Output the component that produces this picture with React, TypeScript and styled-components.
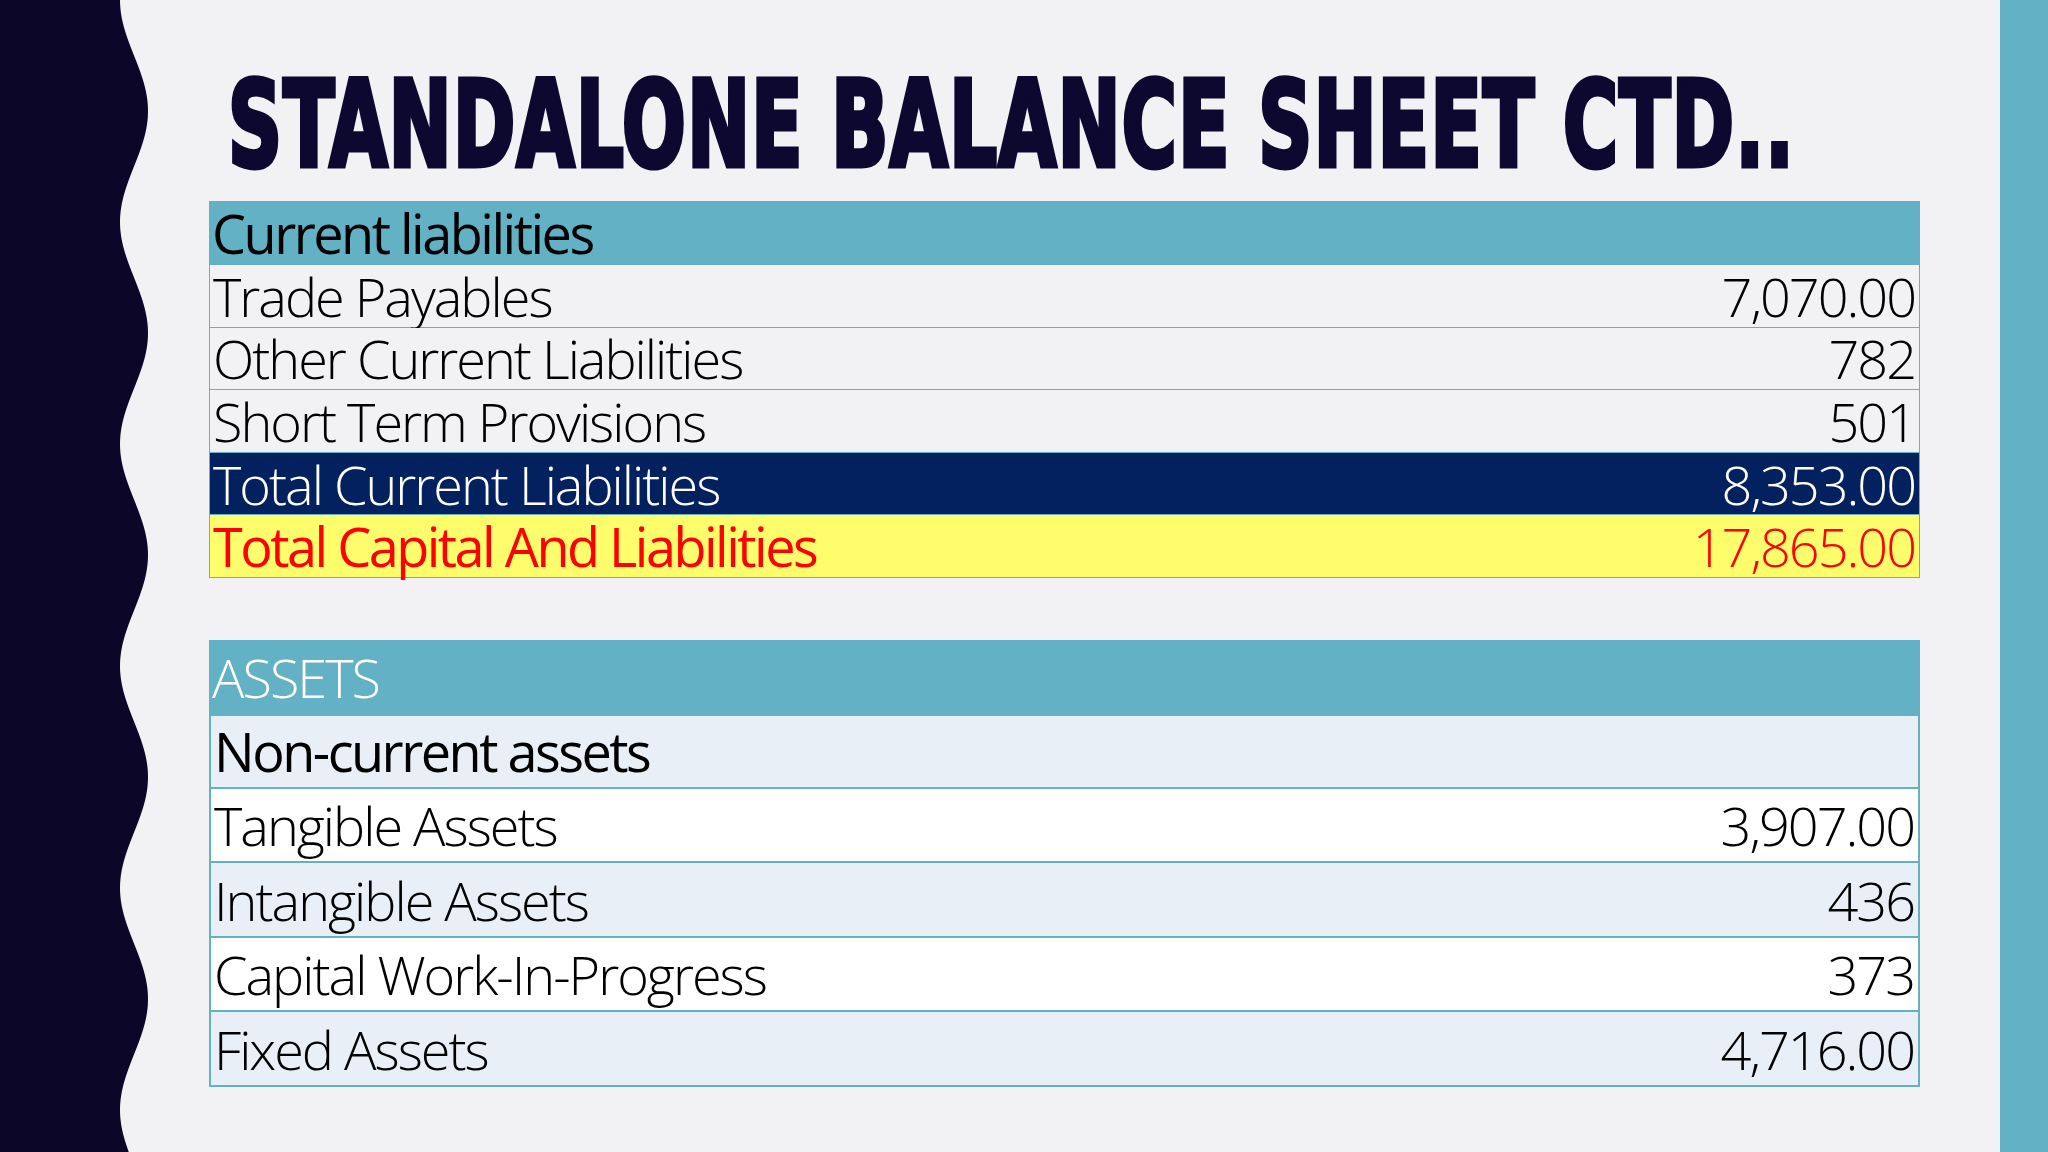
import React, { useLayoutEffect, useRef, useState } from "react";
import styled, { createGlobalStyle } from "styled-components";

const Global = createGlobalStyle`
  html, body { margin: 0; padding: 0; }
  body { width: 2048px; height: 1152px; overflow: hidden; background: #f2f2f4; }
`;

const Page = styled.div`
  display: flex;
  width: 2048px;
  height: 1152px;
  background: #f2f2f4;
`;

const WaveBand = styled.div`
  width: 150px;
  flex-shrink: 0;
  height: 100%;
  svg { display: block; }
`;

const Main = styled.main`
  flex: 1;
  display: flex;
  flex-direction: column;
  padding: 66px 80px 0 59px;
  min-width: 0;
`;

const SideBar = styled.div`
  width: 48px;
  flex-shrink: 0;
  background: #62b1c4;
`;

const TitleBox = styled.div`
  height: 119px;
  margin: 0 0 16px 19px;
  display: flex;
`;

const Title = styled.h1`
  margin: 0;
  flex-shrink: 0;
  transform-origin: 0 50%;
  font-family: "DejaVu Sans Condensed", "DejaVu Sans", sans-serif;
  font-weight: 700;
  font-size: 119px;
  line-height: 119px;
  letter-spacing: 2px;
  color: #0d0830;
  -webkit-text-stroke: 5px #0d0830;
  white-space: nowrap;
`;

const Table = styled.div<{ $gap?: number }>`
  display: flex;
  flex-direction: column;
  margin-top: ${(p) => p.$gap ?? 0}px;
  font-family: "Open Sans", "Noto Sans", sans-serif;
  font-size: 54px;
`;

type Tone = "head" | "plain" | "navy" | "yellow" | "light" | "white" | "sub";

const bgs: Record<Tone, string> = {
  head: "#62b1c4",
  plain: "#f2f2f4",
  navy: "#03205f",
  yellow: "#fefd6c",
  light: "#e9eff6",
  white: "#ffffff",
  sub: "#e9eff6",
};

const fgs: Record<Tone, string> = {
  head: "#000000",
  plain: "#000000",
  navy: "#ffffff",
  yellow: "#ff0000",
  light: "#000000",
  white: "#000000",
  sub: "#000000",
};

const Row = styled.div<{ $tone: Tone; $h: number; $weight?: number; $color?: string; $bw?: number }>`
  box-sizing: border-box;
  height: ${(p) => p.$h}px;
  display: flex;
  align-items: center;
  justify-content: space-between;
  padding: 0 4px 0 3px;
  background: ${(p) => bgs[p.$tone]};
  color: ${(p) => p.$color ?? fgs[p.$tone]};
  font-weight: ${(p) => p.$weight ?? 300};
  letter-spacing: ${(p) => ((p.$weight ?? 300) >= 400 ? "-2.5px" : "-2px")};
  border-left: ${(p) => (p.$tone === "head" ? "0" : `${p.$bw ?? 1}px solid #62b1c4`)};
  border-right: ${(p) => (p.$tone === "head" ? "0" : `${p.$bw ?? 1}px solid #62b1c4`)};
  border-bottom: ${(p) => p.$bw ?? 1}px solid #62b1c4;
  white-space: nowrap;
  line-height: 1;
`;

const Label = styled.span``;
const Value = styled.span`
  font-weight: 300;
  letter-spacing: -2px;
`;

function Wave() {
  const h = 1152;
  const period = 222;
  let d = "M0,0 ";
  for (let y = 0; y <= h; y += 4) {
    const x = 134 - 14 * Math.cos((2 * Math.PI * y) / period);
    d += `L${x.toFixed(2)},${y} `;
  }
  d += `L0,${h} Z`;
  return (
    <svg width="150" height={h} viewBox={`0 0 150 ${h}`}>
      <path d={d} fill="#0c0628" />
    </svg>
  );
}

function FitTitle({ text, width }: { text: string; width: number }) {
  const ref = useRef<HTMLHeadingElement>(null);
  const [fit, setFit] = useState({ scale: 1, natural: 0 });
  useLayoutEffect(() => {
    if (ref.current) {
      const w = ref.current.offsetWidth;
      if (w > 0) setFit({ scale: width / w, natural: w });
    }
  }, [text, width]);
  return (
    <TitleBox>
      <Title
        ref={ref}
        style={{
          transform: `scaleX(${fit.scale})`,
          marginRight: fit.natural ? `${fit.natural * (fit.scale - 1)}px` : undefined,
        }}
      >
        {text}
      </Title>
    </TitleBox>
  );
}

const liabilities: { label: string; value: string; tone: Tone }[] = [
  { label: "Trade Payables", value: "7,070.00", tone: "plain" },
  { label: "Other Current Liabilities", value: "782", tone: "plain" },
  { label: "Short Term Provisions", value: "501", tone: "plain" },
  { label: "Total Current Liabilities", value: "8,353.00", tone: "navy" },
  { label: "Total Capital And Liabilities", value: "17,865.00", tone: "yellow" },
];

const assets: { label: string; value: string; tone: Tone }[] = [
  { label: "Tangible Assets", value: "3,907.00", tone: "white" },
  { label: "Intangible Assets", value: "436", tone: "light" },
  { label: "Capital Work-In-Progress", value: "373", tone: "white" },
  { label: "Fixed Assets", value: "4,716.00", tone: "light" },
];

export default function App() {
  return (
    <>
      <Global />
      <Page>
        <WaveBand>
          <Wave />
        </WaveBand>
        <Main>
          <FitTitle text="STANDALONE BALANCE SHEET CTD.." width={1567} />
          <Table>
            <Row $tone="head" $h={64} $weight={400}>
              <Label>Current liabilities</Label>
            </Row>
            {liabilities.map((r) => (
              <Row key={r.label} $tone={r.tone} $h={62.6} $weight={r.tone === "yellow" ? 400 : 300}>
                <Label>{r.label}</Label>
                <Value>{r.value}</Value>
              </Row>
            ))}
          </Table>
          <Table $gap={62}>
            <Row $tone="head" $h={76} $color="#ffffff" $bw={2}>
              <Label>ASSETS</Label>
            </Row>
            <Row $tone="sub" $h={73} $weight={400} $bw={2}>
              <Label>Non-current assets</Label>
            </Row>
            {assets.map((r) => (
              <Row key={r.label} $tone={r.tone} $h={74.5} $bw={2}>
                <Label>{r.label}</Label>
                <Value>{r.value}</Value>
              </Row>
            ))}
          </Table>
        </Main>
        <SideBar />
      </Page>
    </>
  );
}
